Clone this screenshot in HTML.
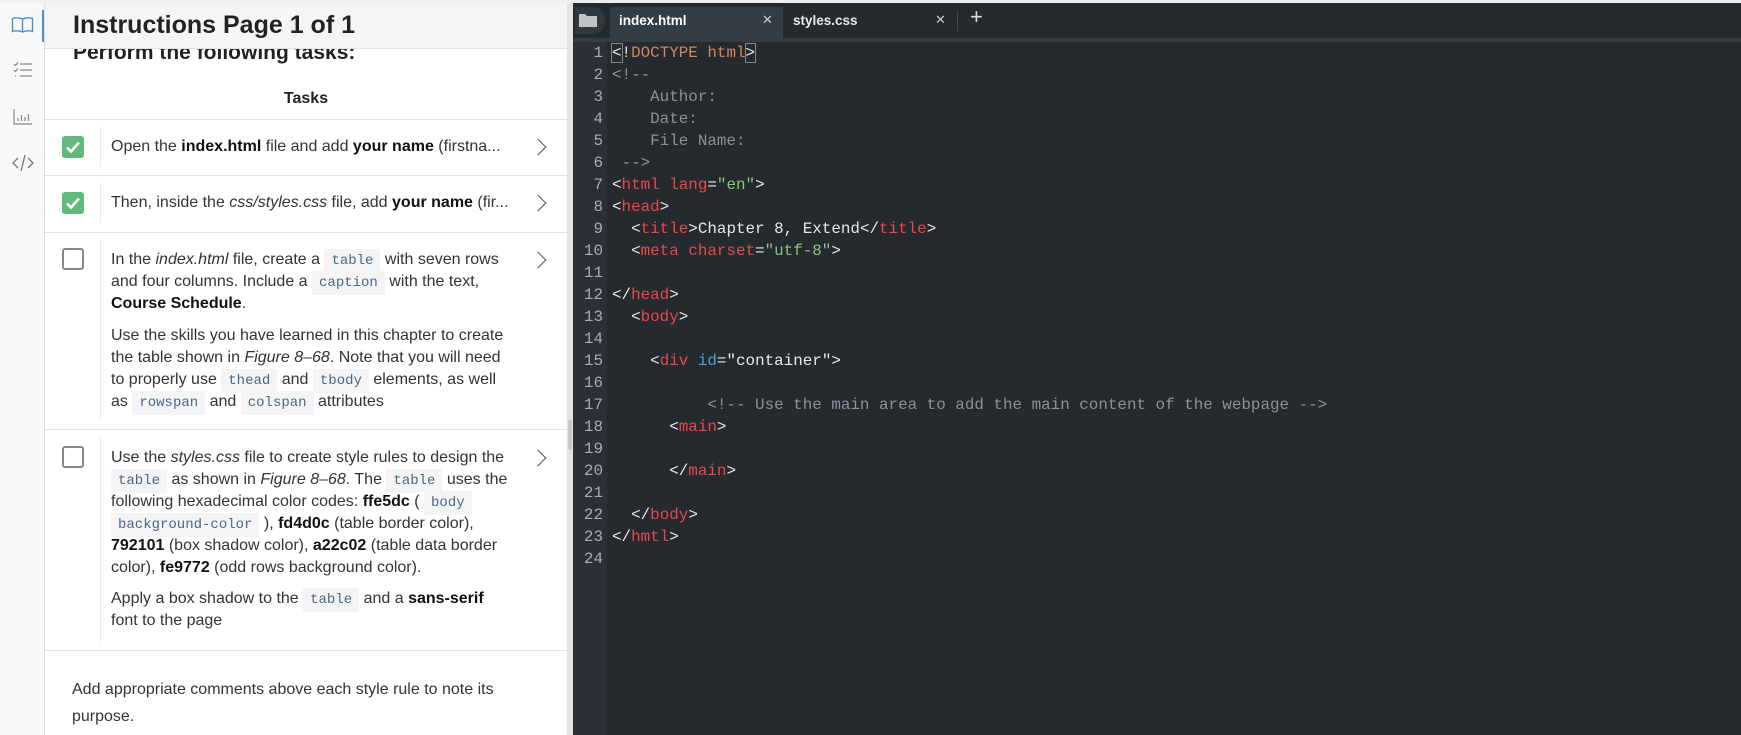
<!DOCTYPE html>
<html><head><meta charset="utf-8">
<style>
*{box-sizing:border-box;margin:0;padding:0}
body{width:1741px;height:735px;overflow:hidden;background:#fff;font-family:"Liberation Sans",sans-serif;position:relative}
.abs{position:absolute}
#side{left:0;top:3px;width:45px;height:732px;background:#f8f8f8;border-right:1px solid #e0e0e0}
#topstrip{left:0;top:0;width:1741px;height:3px;background:#f0f0f0}
#hdr{left:45px;top:3px;width:522px;height:46px;background:#f5f5f5;border-bottom:1px solid #e2e2e2}
#hdr h1{position:absolute;left:28px;top:8px;font-size:25px;font-weight:bold;color:#222}
.t{color:#333;font-size:16px;line-height:22px;position:absolute;left:111px;width:405px}
.t b{color:#111}
code{font-family:"Liberation Mono",monospace;font-size:14px;line-height:14px;background:#f4f4f4;color:#4a6789;padding:4px 7px}
.hl{position:absolute;left:45px;width:522px;height:1px;background:#e2e2e2}
.vl{position:absolute;left:100px;width:1px;background:#ececec}
.cb{position:absolute;left:62px;width:22px;height:22px;border-radius:3px}
.cb.on{background:#62b97b}
.cb.off{border:2px solid #888;background:#fff}
.chev{position:absolute;left:532px;width:12px;height:12px;border-right:1px solid #555;border-top:1px solid #555;transform:rotate(45deg)}
#ed{left:573px;top:3px;width:1168px;height:732px;background:#252a2e}
#gut{left:573px;top:42px;width:34px;height:693px;background:#2a3035}
.ln{position:absolute;left:573px;width:30px;text-align:right;font-family:"Liberation Mono",monospace;font-size:15.9px;color:#a8adb2;line-height:22px}
.cl{position:absolute;left:612px;font-family:"Liberation Mono",monospace;font-size:15.9px;color:#e8e8e8;line-height:22px;white-space:pre}
.r{color:#e8474c}.g{color:#8cc47f}.c{color:#8a9298}.o{color:#d4845f}.bl{color:#4f9fd8}
</style></head><body>
<div class="abs" id="topstrip"></div>
<div class="abs" id="side">
 <div class="abs" style="left:42px;top:7px;width:2px;height:32px;background:#4a90c8"></div>
 <svg class="abs" style="left:11px;top:13px" width="23" height="18" viewBox="0 0 23 18"><path d="M1.5 2.5Q6 1 11.5 3Q17 1 21.5 2.5V15.5Q17 14 11.5 16Q6 14 1.5 15.5Z M11.5 3V16" fill="none" stroke="#4a90c8" stroke-width="1.4"/></svg>
 <svg class="abs" style="left:13px;top:59px" width="20" height="16" viewBox="0 0 20 16"><path d="M1 2l1.5 1.5L5 0.5M1 8l1.5 1.5L5 6.5M7 2h12M7 8h12M7 14h12M2 14h1" fill="none" stroke="#888" stroke-width="1.2"/></svg>
 <svg class="abs" style="left:13px;top:105px" width="20" height="17" viewBox="0 0 20 17"><path d="M1 1v15h18M5 13v-3M8.5 13v-6M12 13v-4M15.5 13v-7" fill="none" stroke="#888" stroke-width="1.2"/></svg>
 <svg class="abs" style="left:11px;top:151px" width="24" height="18" viewBox="0 0 24 18"><path d="M7 4L2 9l5 5M17 4l5 5-5 5M14 1L10 17" fill="none" stroke="#777" stroke-width="1.3"/></svg>
</div>
<div class="abs" style="left:45px;top:49px;width:522px;height:686px;background:#fff"></div>
<div class="abs" style="left:73px;top:44px;font-size:21px;font-weight:bold;color:#222;height:20px;overflow:hidden;width:400px"><div style="margin-top:-3px">Perform the following tasks:</div></div>
<div class="abs" id="hdr"><h1>Instructions Page 1 of 1</h1></div>
<div class="abs" style="left:45px;top:90px;width:522px;text-align:center;font-weight:bold;font-size:16px;color:#222">Tasks</div>
<div class="hl" style="top:119px"></div>
<div class="hl" style="top:175px"></div>
<div class="hl" style="top:232px"></div>
<div class="hl" style="top:429px"></div>
<div class="hl" style="top:650px"></div>
<div class="vl" style="top:127px;height:40px"></div>
<div class="vl" style="top:183px;height:40px"></div>
<div class="vl" style="top:240px;height:180px"></div>
<div class="vl" style="top:437px;height:205px"></div>
<div class="cb on" style="top:136px"><svg width="22" height="22"><path d="M5 11.5l4 4 8-9" fill="none" stroke="#fff" stroke-width="2.6"/></svg></div>
<div class="cb on" style="top:192px"><svg width="22" height="22"><path d="M5 11.5l4 4 8-9" fill="none" stroke="#fff" stroke-width="2.6"/></svg></div>
<div class="cb off" style="top:248px"></div>
<div class="cb off" style="top:446px"></div>
<div class="chev" style="top:141px"></div>
<div class="chev" style="top:197px"></div>
<div class="chev" style="top:254px"></div>
<div class="chev" style="top:452px"></div>
<div class="t" style="top:136px;white-space:nowrap">Open the <b>index.html</b> file and add <b>your name</b> (firstna...</div>
<div class="t" style="top:192px;white-space:nowrap">Then, inside the <i>css/styles.css</i> file, add <b>your name</b> (fir...</div>
<div class="t" style="top:249px">In the <i>index.html</i> file, create a <code>table</code> with seven rows<br>and four columns. Include a <code>caption</code> with the text,<br><b>Course Schedule</b>.</div>
<div class="t" style="top:325px">Use the skills you have learned in this chapter to create<br>the table shown in <i>Figure 8–68</i>. Note that you will need<br>to properly use <code>thead</code> and <code>tbody</code> elements, as well<br>as <code>rowspan</code> and <code>colspan</code> attributes</div>
<div class="t" style="top:447px">Use the <i>styles.css</i> file to create style rules to design the<br><code>table</code> as shown in <i>Figure 8–68</i>. The <code>table</code> uses the<br>following hexadecimal color codes: <b>ffe5dc</b> ( <code>body</code><br><code>background-color</code> ), <b>fd4d0c</b> (table border color),<br><b>792101</b> (box shadow color), <b>a22c02</b> (table data border<br>color), <b>fe9772</b> (odd rows background color).</div>
<div class="t" style="top:588px">Apply a box shadow to the <code>table</code> and a <b>sans-serif</b><br>font to the page</div>
<div class="t" style="left:72px;top:676px;width:440px;line-height:27px">Add appropriate comments above each style rule to note its<br>purpose.</div>
<div class="abs" style="left:567px;top:3px;width:6px;height:732px;background:#e4e4e4"></div>
<div class="abs" style="left:568px;top:420px;width:4px;height:30px;background:#c8c8c8;border-radius:2px"></div>
<div class="abs" id="ed"></div>
<div class="abs" style="left:573px;top:38px;width:1168px;height:4px;background:#353d44"></div>
<div class="abs" style="left:575px;top:7px;width:30px;height:27px;background:#30373d;border-radius:0 12px 12px 0"></div>
<svg class="abs" style="left:579px;top:13px" width="18" height="14"><path d="M0 1h6l2 2h10v11H0z" fill="#bfc3c6"/></svg>
<div class="abs" style="left:610px;top:7px;width:173px;height:31px;background:#353d44"></div>
<div class="abs" style="left:619px;top:13px;color:#fff;font-size:13.5px;font-weight:bold">index.html</div>
<div class="abs" style="left:762px;top:12px;color:#ccc;font-size:13px">✕</div>
<div class="abs" style="left:793px;top:13px;color:#e8e8e8;font-size:13.5px;font-weight:bold">styles.css</div>
<div class="abs" style="left:935px;top:12px;color:#ccc;font-size:13px">✕</div>
<div class="abs" style="left:957px;top:11px;width:1px;height:20px;background:#444b51"></div>
<div class="abs" style="left:970px;top:4px;color:#ddd;font-size:22px">+</div>
<div class="abs" id="gut"></div>
<div class="ln" style="top:42px">1</div><div class="ln" style="top:64px">2</div><div class="ln" style="top:86px">3</div><div class="ln" style="top:108px">4</div><div class="ln" style="top:130px">5</div><div class="ln" style="top:152px">6</div><div class="ln" style="top:174px">7</div><div class="ln" style="top:196px">8</div><div class="ln" style="top:218px">9</div><div class="ln" style="top:240px">10</div><div class="ln" style="top:262px">11</div><div class="ln" style="top:284px">12</div><div class="ln" style="top:306px">13</div><div class="ln" style="top:328px">14</div><div class="ln" style="top:350px">15</div><div class="ln" style="top:372px">16</div><div class="ln" style="top:394px">17</div><div class="ln" style="top:416px">18</div><div class="ln" style="top:438px">19</div><div class="ln" style="top:460px">20</div><div class="ln" style="top:482px">21</div><div class="ln" style="top:504px">22</div><div class="ln" style="top:526px">23</div><div class="ln" style="top:548px">24</div>
<div class="cl" style="top:42px"><span style="outline:1px solid #888">&lt;</span>!<span class="o">DOCTYPE html</span><span style="outline:1px solid #888">&gt;</span></div>
<div class="cl c" style="top:64px">&lt;!--</div>
<div class="cl c" style="top:86px">    Author:</div>
<div class="cl c" style="top:108px">    Date:</div>
<div class="cl c" style="top:130px">    File Name:</div>
<div class="cl c" style="top:152px"> --&gt;</div>
<div class="cl" style="top:174px">&lt;<span class="r">html lang</span>=<span class="g">"en"</span>&gt;</div>
<div class="cl" style="top:196px">&lt;<span class="r">head</span>&gt;</div>
<div class="cl" style="top:218px">  &lt;<span class="r">title</span>&gt;Chapter 8, Extend&lt;/<span class="r">title</span>&gt;</div>
<div class="cl" style="top:240px">  &lt;<span class="r">meta charset</span>=<span class="g">"utf-8"</span>&gt;</div>
<div class="cl" style="top:284px">&lt;/<span class="r">head</span>&gt;</div>
<div class="cl" style="top:306px">  &lt;<span class="r">body</span>&gt;</div>
<div class="cl" style="top:350px">    &lt;<span class="r">div</span> <span class="bl">id</span>="container"&gt;</div>
<div class="cl c" style="top:394px">          &lt;!-- Use the main area to add the main content of the webpage --&gt;</div>
<div class="cl" style="top:416px">      &lt;<span class="r">main</span>&gt;</div>
<div class="cl" style="top:460px">      &lt;/<span class="r">main</span>&gt;</div>
<div class="cl" style="top:504px">  &lt;/<span class="r">body</span>&gt;</div>
<div class="cl" style="top:526px">&lt;/<span class="r">hmtl</span>&gt;</div>
</body></html>
